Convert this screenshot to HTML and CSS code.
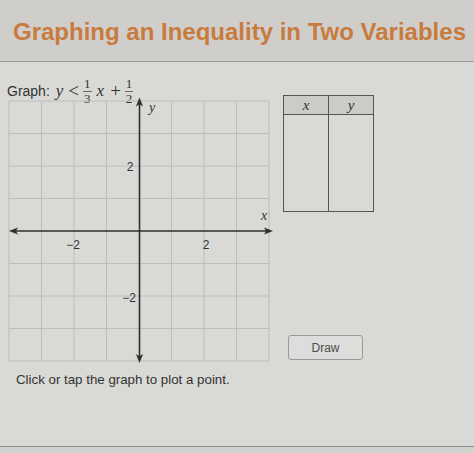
FILE: index.html
```html
<!DOCTYPE html>
<html>
<head>
<meta charset="utf-8">
<link rel="stylesheet" href="styles.css">
</head>
<body>
<div class="header"><h1 class="title">Graphing an Inequality in Two Variables</h1></div>
<div class="main">
  <div class="row">
    <div class="left">
      <div class="label">
        <span class="word">Graph:</span>
        <span class="mi">y</span>
        <span class="mo lt">&lt;</span>
        <span class="frac"><span class="num">1</span><span class="den">3</span></span>
        <span class="mi mx">x</span>
        <span class="mo plus">+</span>
        <span class="frac"><span class="num">1</span><span class="den">2</span></span>
      </div>
      <svg class="plane" viewBox="6 97 270 268" width="270" height="268">
        <g class="grid">
          <line x1="9" y1="101" x2="9" y2="361"/>
          <line x1="41.5" y1="101" x2="41.5" y2="361"/>
          <line x1="74" y1="101" x2="74" y2="361"/>
          <line x1="106.5" y1="101" x2="106.5" y2="361"/>
          <line x1="171.5" y1="101" x2="171.5" y2="361"/>
          <line x1="204" y1="101" x2="204" y2="361"/>
          <line x1="236.5" y1="101" x2="236.5" y2="361"/>
          <line x1="269" y1="101" x2="269" y2="361"/>
          <line x1="9" y1="101" x2="269" y2="101"/>
          <line x1="9" y1="133.5" x2="269" y2="133.5"/>
          <line x1="9" y1="166" x2="269" y2="166"/>
          <line x1="9" y1="198.5" x2="269" y2="198.5"/>
          <line x1="9" y1="263.5" x2="269" y2="263.5"/>
          <line x1="9" y1="296" x2="269" y2="296"/>
          <line x1="9" y1="328.5" x2="269" y2="328.5"/>
          <line x1="9" y1="361" x2="269" y2="361"/>
        </g>
        <g class="axes">
          <line x1="14" y1="231" x2="268" y2="231"/>
          <line x1="139.5" y1="103" x2="139.5" y2="358"/>
        </g>
        <g class="heads">
          <path d="M273 231 l-9 -3.6 l2.2 3.6 l-2.2 3.6 z"/>
          <path d="M9 231 l9 -3.6 l-2.2 3.6 l2.2 3.6 z"/>
          <path d="M139.5 97.5 l-3.6 9 l3.6 -2.2 l3.6 2.2 z"/>
          <path d="M139.5 363 l-3.6 -9 l3.6 2.2 l3.6 -2.2 z"/>
        </g>
        <g class="nums">
          <text x="130" y="171" text-anchor="middle">2</text>
          <text x="73" y="249" text-anchor="middle">−2</text>
          <text x="206" y="249" text-anchor="middle">2</text>
          <text x="129" y="302" text-anchor="middle">−2</text>
        </g>
        <text class="axlabel" x="152" y="112" text-anchor="middle">y</text>
        <text class="axlabel" x="264" y="220" text-anchor="middle">x</text>
      </svg>
    </div>
    <div class="right">
      <div class="xy">
        <div class="cell head">x</div>
        <div class="cell head divider">y</div>
        <div class="cell"></div>
        <div class="cell divider"></div>
      </div>
      <button class="draw">Draw</button>
    </div>
  </div>
  <p class="hint">Click or tap the graph to plot a point.</p>
</div>
<div class="footer"></div>
</body>
</html>
```
FILE: styles.css
```css
html, body {
  margin: 0;
  padding: 0;
}
body {
  width: 474px;
  height: 453px;
  overflow: hidden;
  background: #d9d9d6;
  font-family: "Liberation Sans", Arial, sans-serif;
  color: #333;
}
.header {
  background: #cfcecb;
  padding: 18px 0 15px 13px;
  border-bottom: 1px solid #9c9c9a;
}
.title {
  margin: 0;
  font-size: 24px;
  line-height: 28px;
  font-weight: bold;
  color: #c97b3e;
  white-space: nowrap;
}
.main {
  padding: 23px 0 0 6px;
}
.row {
  display: flex;
  gap: 7px;
}
.left {
  display: flex;
  flex-direction: column;
}
.label {
  height: 12px;
  display: flex;
  align-items: center;
  padding-left: 1px;
  font-size: 14px;
  color: #333;
}
.word {
  margin-right: 6px;
}
.mi {
  font-family: "Liberation Serif", "Times New Roman", serif;
  font-style: italic;
  font-size: 17px;
}
.mx {
  margin-left: 5px;
}
.mo {
  font-family: "Liberation Serif", "Times New Roman", serif;
  font-size: 19px;
}
.lt {
  margin: 0 4px 0 5px;
}
.plus {
  margin: 0 4px 0 6px;
}
.frac {
  display: inline-flex;
  flex-direction: column;
  align-items: center;
  font-family: "Liberation Serif", "Times New Roman", serif;
  font-size: 13px;
  line-height: 12px;
}
.num {
  padding: 0 1px 1px;
  border-bottom: 1px solid #666;
}
.den {
  padding-top: 1px;
}
.plane {
  display: block;
}
.grid line {
  stroke: #bcbcba;
  stroke-width: 1;
}
.axes line {
  stroke: #2e2e2e;
  stroke-width: 1.6;
}
.heads path {
  fill: #2e2e2e;
}
.nums text {
  font-family: "Liberation Sans", Arial, sans-serif;
  font-size: 12px;
  fill: #333;
}
.axlabel {
  font-family: "Liberation Serif", "Times New Roman", serif;
  font-style: italic;
  font-size: 14px;
  fill: #333;
}
.right {
  display: flex;
  flex-direction: column;
  align-items: flex-start;
  padding-top: 10px;
}
.xy {
  width: 89px;
  height: 115px;
  border: 1px solid #555;
  display: grid;
  grid-template-columns: 44px 45px;
  grid-template-rows: 19px 1fr;
}
.cell {
  font-family: "Liberation Serif", "Times New Roman", serif;
  font-style: italic;
  font-size: 15px;
  text-align: center;
  line-height: 19px;
}
.cell.head {
  background: #cbcbc8;
  border-bottom: 1px solid #555;
}
.cell.divider {
  border-left: 1px solid #555;
}
.draw {
  margin: 123px 0 0 5px;
  width: 75px;
  height: 25px;
  padding: 0;
  border: 1px solid #9a9a98;
  border-radius: 3px;
  background: #dddddb;
  font-family: "Liberation Sans", Arial, sans-serif;
  font-size: 12px;
  color: #4c4c4c;
}
.hint {
  margin: 7px 0 0 10px;
  font-size: 13.3px;
  line-height: 16px;
  color: #333;
}
.footer {
  margin-top: 58px;
  height: 7px;
  border-top: 1px solid #8d8d8b;
  background: #d2d2cf;
}
```
